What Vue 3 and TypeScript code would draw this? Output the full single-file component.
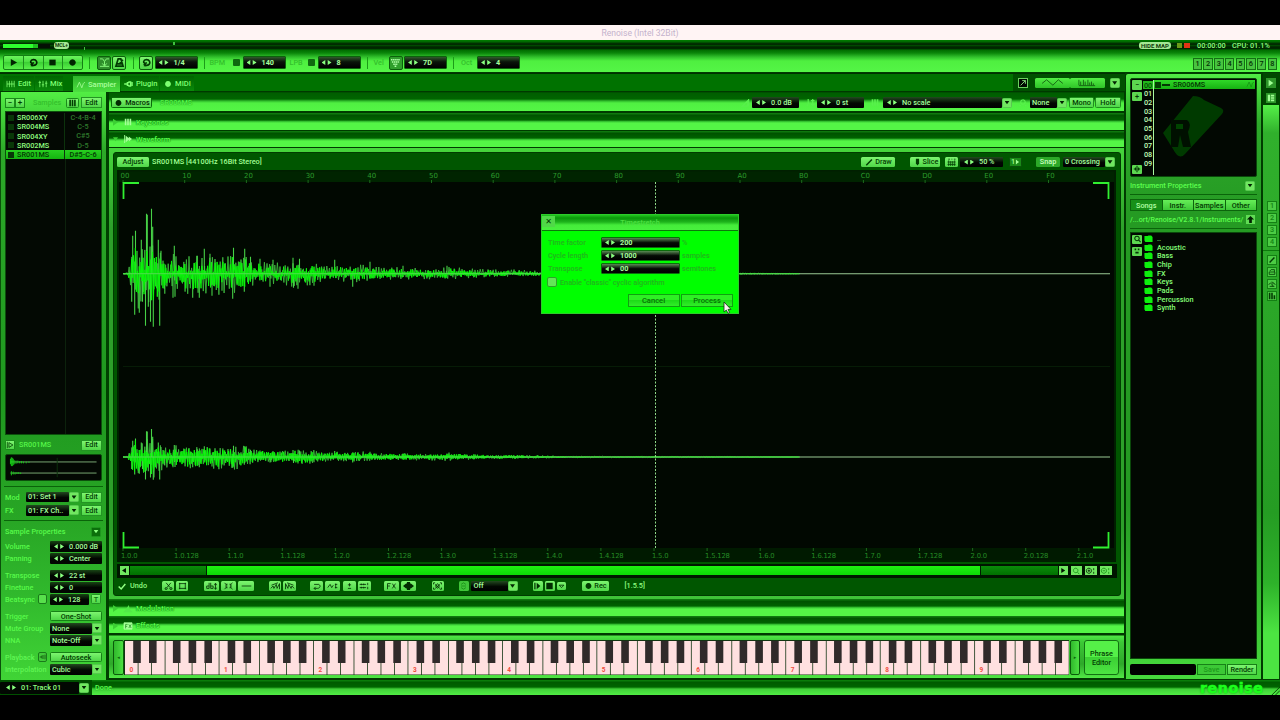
<script setup lang="ts">
type Tool = { w: number; d: string; fill?: boolean }

const icons = {
  play: 'M3 1 L10 5 L3 9 Z',
  loop: 'M3 8.2 L5 6 M3 8.4 L5.8 8.6 M3.6 8 C9 9 10.5 6 9.4 3.8 C8 1 3.5 1.2 2.8 4 C2.5 5.6 4.5 6.2 6.5 5.4',
  stop: 'M2.5 1.8 H9.5 V8.2 H2.5 Z',
  rec: 'M6 1.4 A3.6 3.6 0 1 1 5.99 1.4 Z',
  follow: 'M1 1 H4 L6 4 L8 1 H11 M6 4 V8 M3.5 6 L6 9 L8.5 6 M1 9.3 H11',
  metro: 'M4.5 1 H7.5 L10 9 H2 Z M3 6.5 H9 M6 6.5 L9.8 2',
  wave: 'M1 8 L4 1.5 L7 8.5 L9 3 L10 2 H11',
  plug: 'M0 5 H4 M4 3.5 H5 L6 2.5 H8 V7.5 H6 L5 6.5 H4 Z M8 3.7 H11 M8 6.3 H11',
  piano: 'M2 1 H4 V9 H2 Z M5 1 H7 V9 H5 Z M8 1 H10 V9 H8 Z',
  search: 'M5 1.5 A2.8 2.8 0 1 1 4.99 1.5 M7.2 6.5 L9.5 9',
}

const transport = [icons.play, icons.loop, icons.stop, icons.rec]
const slots = ['1', '2', '3', '4', '5', '6', '7', '8']
const samples = [
  { name: 'SR006XY', key: 'C-4-B-4' },
  { name: 'SR004MS', key: 'C-5' },
  { name: 'SR004XY', key: 'C#5' },
  { name: 'SR002MS', key: 'D-5' },
  { name: 'SR001MS', key: 'D#5-C-6' },
]

const toolGroups: { name: string; tools: Tool[] }[] = [
  { name: 'cut', tools: [
    { w: 12, d: 'M3 1 L8 7 M9 1 L4 7 M3 7 A1.3 1.3 0 1 0 3.1 7 M9 7 A1.3 1.3 0 1 0 9.1 7' },
    { w: 12, d: 'M1.5 2 H10.5 M1.5 8 H10.5 M2.5 1 V9 M9.5 1 V9' } ] },
  { name: 'level', tools: [
    { w: 15, d: 'M3 1 V8 H0 V5 H3 M5 1 V8 H8 V5 H5 M11 2 V9 M9.5 4 L11 1.5 L12.5 4 M9.5 7 L11 9.2 L12.5 7' },
    { w: 15, d: 'M1 1 L4 4 M4 2 V4 H2 M11 1 L8 4 M8 2 V4 H10 M1 9 L4 6 M4 8 V6 H2 M11 9 L8 6 M8 8 V6 H10' },
    { w: 16, d: 'M0 5 H12' } ] },
  { name: 'fade', tools: [
    { w: 12, d: 'M0 8 L3 5 L4 8 L7 3 L8 8 L11 2 V9 M1 4 L9 1' },
    { w: 13, d: 'M1 9 V2 L4 8 L5 3 L8 8 L9 5 L12 8 M3 1 L11 4' } ] },
  { name: 'shape', tools: [
    { w: 13, d: 'M3 3 H9 C12 5 10 8 7 8 H3 M5 6 L3 8 L5 10' },
    { w: 15, d: 'M0 7 L3 3 L5 7 L7 4 M10 2 V8 M9 3 H12 M9 7 H12' },
    { w: 13, d: 'M4 3.5 H8 M6 1.5 V5.5 M4 8 H8' },
    { w: 13, d: 'M0 3 H8 M0 7 H8 M2 2 V4 M5 2 V4 M2 6 V8 M5 6 V8 M10 1 V4 M10 6 V9' } ] },
  { name: 'fx', tools: [
    { w: 15, d: 'M1 9 V2 H5 M1 5 H4 M7 2 L11 8 M11 2 L7 8' },
    { w: 15, d: 'M-1 5 L3 2 H4 V0 H8 V2 H9 L13 5 L9 8 H8 V10 H4 V8 H3 Z', fill: true } ] },
  { name: 'solo', tools: [
    { w: 12, d: 'M1 3 V1 H3 M9 1 H11 V3 M1 7 V9 H3 M9 9 H11 V7 M3 3 L9 8 M9 3 L3 8 M6 2 L8.5 5 L6 8 L3.5 5 Z' } ] },
]

const props1 = [
  { label: 'Volume', value: '0.000 dB' },
  { label: 'Panning', value: 'Center' },
]
const files = ['..', 'Acoustic', 'Bass', 'Chip', 'FX', 'Keys', 'Pads', 'Percussion', 'Synth']
const rows = ['00', '01', '02', '03', '04', '05', '06', '07', '08', '09']
const stretch = [
  { label: 'Time factor', value: '200', unit: '%' },
  { label: 'Cycle length', value: '1000', unit: 'samples' },
  { label: 'Transpose', value: '00', unit: 'semitones' },
]

const topMarks = Array.from({ length: 16 }, (_, i) => ({
  x: 125 + i * 61.7,
  label: i.toString(16).toUpperCase() + '0',
}))
const beatMarks = Array.from({ length: 19 }, (_, i) => {
  const beat = Math.floor(i / 2)
  return {
    x: 121 + i * 53.1,
    label: `${1 + Math.floor(beat / 8)}.${beat % 8}.${i % 2 ? '128' : '0'}`,
  }
})

// Envelope points: x, amplitude above the axis, amplitude below it.
const envelope = [
  [123, 0, 0], [128, 2, 2], [131, 16, 22], [133, 36, 30], [136, 36, 34], [139, 20, 36], [142, 28, 28],
  [144, 24, 36], [146, 36, 40], [149, 26, 30], [151, 40, 36], [153, 38, 40], [156, 23, 28], [159, 28, 38],
  [163, 21, 20], [168, 13, 18], [174, 25, 24], [179, 14, 15], [186, 18, 21], [194, 18, 22], [201, 18, 21],
  [207, 20, 20], [214, 17, 22], [225, 17, 20], [233, 24, 24], [240, 21, 20], [245, 23, 18], [251, 14, 13],
  [262, 14, 10], [272, 13, 12], [280, 10, 10], [293, 15, 14], [300, 13, 13], [310, 12, 12], [318, 12, 12],
  [324, 7, 8], [334, 11, 7], [345, 8, 8], [355, 9, 9], [370, 10, 7], [380, 7, 6], [400, 7, 6], [415, 6, 6],
  [435, 5, 6], [448, 8, 7], [460, 6, 5], [490, 5, 4], [520, 4, 3], [560, 2, 2], [620, 1.2, 1.2], [700, 1, 1],
  [750, 0.8, 0.8], [800, 0.2, 0.2],
]

// Single transients: x, signed distance from the axis (up is negative).
const peaks = [
  [132.7, -38], [135.5, -43], [141.3, -34], [146.5, -60], [147.3, -59], [151.5, -65], [152.7, -47], [158.3, -34],
  [161, -23], [174.3, -28], [197.3, -18], [204.3, -25], [210, -20], [233.5, -26], [244.7, -25], [250.5, -17],
  [260, -15], [273, -14], [293, -16], [299.5, -15], [334.7, -14], [370, -12], [403, -8], [447, -8],
  [131.7, 28], [134.7, 41], [139.3, 39], [142.5, 28], [145.5, 52], [148.3, 33], [150.5, 48], [153.3, 53],
  [159.7, 52], [164.8, 20], [173, 24], [175, 23], [192.7, 24], [199.3, 24], [212, 22], [222, 17], [232.7, 25],
  [244.3, 18], [270, 13], [293.5, 14], [298, 15], [314, 12], [352.7, 13],
]

function level(x: number, side: 1 | 2): number {
  for (let i = 1; i < envelope.length; i++) {
    const a = envelope[i - 1]
    const b = envelope[i]
    if (x <= b[0]) return a[side] + ((b[side] - a[side]) * (x - a[0])) / (b[0] - a[0])
  }
  return 0
}

function trace(axis: number, scale: number, seed: number, floor: number, step: number): string {
  let s = seed
  const rnd = () => {
    s = (s * 16807) % 2147483647
    return s / 2147483647
  }
  let d = `M123 ${axis}`
  for (let x = 124; x < 800; x += step) {
    const up = level(x, 1) * scale * (floor + (1 - floor) * rnd())
    const down = level(x + step / 2, 2) * scale * (floor + (1 - floor) * rnd())
    d += ` L${x.toFixed(1)} ${(axis - up).toFixed(1)} L${(x + step / 2).toFixed(1)} ${(axis + down).toFixed(1)}`
  }
  return d
}

function spikes(axis: number, scale: number): string {
  return peaks.map(([x, h]) => `M${x} ${axis} V${(axis + h * scale).toFixed(1)}`).join(' ')
}

const channels = [
  { axis: 273.7, edge: trace(273.7, 1, 4711, 0.2, 2.6), body: trace(273.7, 0.72, 917, 0.1, 1.9), peak: spikes(273.7, 1) },
  { axis: 457, edge: trace(457, 0.58, 3307, 0.25, 2.6), body: trace(457, 0.46, 77, 0.2, 1.9), peak: spikes(457, 0.43) },
]

const octaves = Array.from({ length: 10 }, (_, i) => 124.6 + i * 94.45)
const whites = [0, 1, 2, 3, 4, 5, 6]
const blacks = [8.6, 24.4, 48.3, 64, 79.8]
</script>

<template>
  <div class="screen">
    <div class="titlebar">Renoise (Intel 32Bit)</div>

    <div class="meters">
      <div class="gain"><b></b></div>
      <span class="pill mcl">MCL+</span>
      <div class="scope"><i></i><b></b></div>
      <span class="pill map">HIDE MAP</span>
      <i class="led olive"></i><i class="led red"></i>
      <span class="clock">00:00:00</span>
      <span class="cpu">CPU: 01.1%</span>
    </div>

    <div class="transport">
      <div class="playgroup">
        <span v-for="(d, i) in transport" :key="i" class="tbtn">
          <svg viewBox="0 0 12 10" :class="{ solid: i !== 1, bold: i === 1 }"><path :d="d" /></svg>
        </span>
      </div>
      <i class="sep s1"></i>
      <span class="sq down b1"><svg viewBox="0 0 12 10"><path :d="icons.follow" /></svg></span>
      <span class="sq b2"><svg viewBox="0 0 12 10" class="bold"><path :d="icons.metro" /></svg></span>
      <i class="sep s2"></i>
      <span class="sq b3"><svg viewBox="0 0 12 10" class="bold"><path :d="icons.loop" /></svg></span>
      <span class="val tv v1">1/4</span>
      <i class="sep s3"></i>
      <span class="faint f1">BPM</span><i class="chk"></i><span class="val tv v2">140</span>
      <span class="faint f2">LPB</span><i class="chk"></i><span class="val tv v2">8</span>
      <i class="sep s3"></i>
      <span class="faint f3">Vel</span>
      <span class="sq lit"><svg viewBox="0 0 12 10"><path class="dots" d="M1 2 H11 M2 4.500 H10 M3.500 7 H8.500 M5 9.300 H7.500" /></svg></span>
      <span class="val tv v1">7D</span>
      <i class="sep s3"></i>
      <span class="faint f4">Oct</span><span class="val tv v3">4</span>
      <div class="slots"><span v-for="n in slots" :key="n">{{ n }}</span></div>
    </div>

    <div class="body">
      <div class="workspace">
        <div class="tabs">
          <span class="tab t1"><svg viewBox="0 0 12 10"><path d="M1 1 V9 M4 1 V9 M7 1 V9 M10 1 V9 M1 5 H10" /></svg>Edit</span>
          <span class="tab t2"><svg viewBox="0 0 12 10"><path d="M2 1 V9 M6 1 V9 M10 1 V9 M0.500 3 H3.500 M4.500 6 H7.500 M8.500 4 H11.500" /></svg>Mix</span>
          <span class="tab t3"><svg viewBox="0 0 12 10"><path :d="icons.wave" /></svg>Sampler</span>
          <span class="tab t4"><svg viewBox="0 0 12 10" class="bold"><path :d="icons.plug" /></svg>Plugin</span>
          <span class="tab t5"><svg viewBox="0 0 12 10" class="solid"><path :d="icons.rec" /></svg>MIDI</span>
          <div class="viewtabs">
            <span class="pop"><svg viewBox="0 0 10 10"><path d="M2 8 L8 2 M4 2 H8 V6" /></svg></span>
            <span class="vt"><svg viewBox="0 0 34 10"><path d="M6 6 L11 2 L18 8 L24 2 L29 6" /></svg></span>
            <span class="vt"><svg viewBox="0 0 34 10"><path d="M8 2 V8 M10 4 V8 M13 2 V8 M15 4 V8 M18 2 V8 M20 5 V8 M22 4 V8 M24 6 V8 M8 8.500 H26" /></svg></span>
            <span class="drop vd"></span>
          </div>
        </div>

        <div class="panes">
          <div class="left">
            <div class="lhead">
              <span class="btn pm">−</span><span class="btn pm">+</span>
              <span class="faint lname">Samples</span>
              <span class="btn kb"><svg viewBox="0 0 12 10" class="solid"><path :d="icons.piano" /></svg></span>
              <span class="btn edit">Edit</span>
            </div>
            <div class="slist">
              <div v-for="(s, i) in samples" :key="s.name" class="srow" :class="{ on: i === 4 }">
                <i></i><span class="nm">{{ s.name }}</span><span class="ky">{{ s.key }}</span>
              </div>
              <div class="sfill"></div>
            </div>
            <div class="lhead second">
              <span class="btn pv"><svg viewBox="0 0 12 10"><path d="M2 1 V9 M4 2 L9 5 L4 8 Z" /></svg></span>
              <span class="lname2">SR001MS</span>
              <span class="btn edit">Edit</span>
            </div>
            <svg class="mini" viewBox="0 0 97 27">
              <path d="M2 7.500 H95 M2 19.500 H95" class="axis" />
              <path d="M2 4 V10 M3 2.500 V12 M4 3 V12 M5 4 V11 M6 5.500 V10 M8 6 V9.500 M10 6 V9 M12 6.500 V9 M14 6.500 V9 M16 7 V9 M19 7 V9 M22 7 V8.500 M3 17.500 V22 M5 18 V21 M7 18.500 V21 M9 18.500 V20.500 M11 18.500 V20.500 M13 19 V20.500" />
              <path d="M52.500 3 V24" class="dim" />
            </svg>
            <i class="rule r1"></i>
            <div class="prow mod"><span class="pl">Mod</span><span class="sel ms">01: Set 1</span><span class="drop"></span><span class="btn edit">Edit</span></div>
            <div class="prow mod"><span class="pl">FX</span><span class="sel ms">01: FX Ch..</span><span class="drop"></span><span class="btn edit">Edit</span></div>
            <i class="rule r2"></i>
            <div class="prow sp"><span class="pl wide">Sample Properties</span><span class="drop dk"></span></div>
            <div v-for="p in props1" :key="p.label" class="prow"><span class="pl">{{ p.label }}</span><span class="val pv2">{{ p.value }}</span></div>
            <div class="prow gap"><span class="pl">Transpose</span><span class="val pv2">22 st</span></div>
            <div class="prow"><span class="pl">Finetune</span><span class="val pv2">0</span></div>
            <div class="prow"><span class="pl">Beatsync</span><i class="box"></i><span class="val pv3">128</span><span class="btn tee">T</span></div>
            <div class="prow gap"><span class="pl">Trigger</span><span class="btn full">One-Shot</span></div>
            <div class="prow"><span class="pl">Mute Group</span><span class="sel ps">None</span><span class="drop"></span></div>
            <div class="prow"><span class="pl">NNA</span><span class="sel ps">Note-Off</span><span class="drop"></span></div>
            <div class="prow gap"><span class="pl dimmer">Playback</span><i class="box snd"><svg viewBox="0 0 12 10"><path d="M2 4 V6 M4 3 V7 M6 2 V8 M9 1.500 V8.500" /></svg></i><span class="btn full">Autoseek</span></div>
            <div class="prow"><span class="pl dimmer">Interpolation</span><span class="sel ps">Cubic</span><span class="drop"></span></div>
          </div>

          <div class="center">
            <div class="bar macros">
              <span class="btn mac"><svg viewBox="0 0 12 10" class="solid"><path :d="icons.rec" /></svg>Macros</span>
              <span class="iname">SR006MS</span>
              <div class="mright">
                <svg viewBox="0 0 10 10" class="mi a"><path d="M2 9 L8 3 V9 Z M9 1 V9" /></svg><span class="val mv">0.0 dB</span>
                <svg viewBox="0 0 10 10" class="mi b"><path d="M3 1 V7 M1 8 H3 M8 1 V9 M6 3 H10 M6 7 H10" /></svg><span class="val mv">0 st</span>
                <svg viewBox="0 0 12 10" class="mi c solid"><path :d="icons.piano" /></svg><span class="val scale">No scale</span><span class="drop"></span>
                <svg viewBox="0 0 10 10" class="mi d"><path d="M5 2 A2.500 2.500 0 1 1 4.900 2 M1 8.500 H3 M7 8.500 H9" /></svg><span class="sel none">None</span><span class="drop"></span>
                <span class="btn mono">Mono</span><span class="btn hold">Hold</span>
              </div>
            </div>
            <div class="bar fold k"><i class="tri"></i><svg viewBox="0 0 12 10" class="solid"><path :d="icons.piano" /></svg><span>Keyzones</span></div>
            <div class="bar fold w"><i class="tri open"></i><svg viewBox="0 0 12 10" class="solid"><path d="M1 0 V10 H2 V0 Z M3 0.500 L8 5 L3 9.500 Z M7 2 L11 5 L7 8 Z" /></svg><span>Waveform</span></div>

            <div class="frame">
              <div class="inner">
                <div class="whead">
                  <span class="btn adj">Adjust</span>
                  <span class="info">SR001MS [44100Hz 16Bit Stereo]</span>
                  <div class="wright">
                    <span class="btn draw"><svg viewBox="0 0 12 10" class="bold"><path d="M2 9 L9 2" /></svg>Draw</span>
                    <span class="btn slice"><svg viewBox="0 0 10 10" class="solid"><path d="M3 1 H7 V7 L5 9.500 L3 7 Z" /></svg>Slice</span>
                    <span class="btn grid"><svg viewBox="0 0 12 10"><path d="M1 5 H11 M1 8 H11 M2.500 3 V10 M5 4 V10 M7.500 4 V10 M10 3 V10 M2 1.500 H4 M6 1.500 H7 M9 1.500 H11" /></svg></span>
                    <span class="val pct">50 %</span>
                    <span class="btn one">1<svg viewBox="0 0 6 10" class="solid"><path d="M1 2 L5 5 L1 8 Z" /></svg></span>
                    <span class="btn snap">Snap</span>
                    <span class="sel cross">0 Crossing</span><span class="drop"></span>
                  </div>
                </div>
                <svg class="editor" viewBox="117 170 999 392">
                  <rect x="117" y="170" width="999" height="392" fill="#001f00" />
                  <rect x="119" y="171.500" width="995" height="11" fill="#002400" />
                  <rect x="119" y="182" width="995" height="366" fill="#010801" />
                  <rect x="119" y="548" width="995" height="12" fill="#001a00" />
                  <g v-for="m in topMarks" :key="m.label">
                    <text :x="m.x" y="178" text-anchor="middle" class="mark">{{ m.label }}</text>
                    <rect :x="m.x - 2.500" y="180" width="1" height="3" fill="#1c6a1c" />
                  </g>
                  <g v-for="m in beatMarks" :key="m.label">
                    <text :x="m.x" y="557.500" class="mark low">{{ m.label }}</text>
                    <rect :x="m.x + 1.500" y="548" width="1" height="3" fill="#1c6a1c" />
                  </g>
                  <path d="M123 366.500 H1110" stroke="#061c06" fill="none" />
                  <g v-for="c in channels" :key="c.axis">
                    <path :d="`M123 ${c.axis} H1110`" class="axisline" />
                    <path :d="c.edge" class="edge" />
                    <path :d="c.peak" class="peak" />
                    <path :d="c.body" class="wavebody" />
                    <path :d="`M123 ${c.axis} H800`" class="axisline over" />
                  </g>
                  <path d="M655.500 182 V548" class="cursorline" />
                  <path d="M123.500 199 V183 H139 M1093 183 H1108.500 V199 M123.500 532 V547.500 H139 M1093 547.500 H1108.500 V532" class="corner" />
                </svg>
                <div class="scroller">
                  <span class="sb l"></span>
                  <div class="track"><i class="sa"></i><i class="thumb"></i></div>
                  <span class="sb"></span>
                  <span class="zb z1"><svg viewBox="0 0 12 10"><path :d="icons.search" /></svg></span>
                  <span class="zb z2"><svg viewBox="0 0 12 10" class="dark"><path d="M4 1.500 A3.200 3.200 0 1 1 3.990 1.500 M2.500 4.700 H5.500 M4 3.200 V6.200 M10 1.500 V4 M10 6 V8.500" /></svg></span>
                  <span class="zb"><svg viewBox="0 0 12 10"><path d="M4 1.500 A3.200 3.200 0 1 1 3.990 1.500 M2.500 4.700 H5.500 M10 1.500 V4 M10 6 V8.500" /></svg></span>
                </div>
                <div class="tools">
                  <span class="undo"><svg viewBox="0 0 12 10"><path d="M2 5 L5 8 L10 2" /></svg>Undo</span>
                  <div v-for="g in toolGroups" :key="g.name" class="grp" :class="g.name">
                    <span v-for="(t, i) in g.tools" :key="i" class="tool" :style="{ width: t.w + 'px' }">
                      <svg viewBox="0 0 12 10" :class="{ solid: t.fill }"><path :d="t.d" /></svg>
                    </span>
                  </div>
                  <span class="tool tw"><svg viewBox="0 0 12 10"><path d="M3 3 L6 1 L9 3 M3 7 L6 9 L9 7 M3 5 H9" /></svg></span><span class="sel off">Off</span><span class="drop"></span>
                  <span class="tool p1"><svg viewBox="0 0 12 10" class="solid"><path d="M2 1 H3.500 V9 H2 Z M5 1 L9.500 5 L5 9 Z" /></svg></span>
                  <span class="tool p2"><svg viewBox="0 0 12 10" class="solid"><path d="M2 1 H10 V9 H2 Z" /></svg></span>
                  <span class="tool p2 sm"><svg viewBox="0 0 12 10"><path d="M3 4 L6 7 L9 4 Z" /></svg></span>
                  <span class="btn recb"><svg viewBox="0 0 12 10" class="solid"><path :d="icons.rec" /></svg>Rec</span>
                  <span class="pos">[1.5.5]</span>
                </div>
              </div>
            </div>

            <div class="bar fold m"><i class="tri"></i><svg viewBox="0 0 12 10" class="solid"><path d="M0 9 L5 3 L7 0 L8 5 L12 9 Z" /></svg><span>Modulation</span></div>
            <div class="bar fold e"><i class="tri"></i><svg viewBox="0 0 12 10"><path d="M1 1 H11 V9 H1 Z" fill="currentColor" /><path d="M3 8 V3 H5.500 M3 5.500 H5 M7 3 L10 7.500 M10 3 L7 7.500" class="ink" /></svg><span>Effects</span></div>
            <div class="keyrow">
              <span class="kside kl">◂</span>
              <svg class="piano" viewBox="124 640 945 35">
                <rect x="124" y="640" width="945" height="35" fill="#123412" />
                <g v-for="(o, i) in octaves" :key="i">
                  <rect v-for="w in whites" :key="w" :x="o + w * 13.493 + 0.400" y="641" width="12.700" height="33.500" fill="#ffe0e0" />
                  <rect v-for="b in blacks" :key="b" :x="o + b" y="641" width="7.600" height="22" fill="#302a2a" />
                  <text :x="o + 6.800" y="672.300" text-anchor="middle" class="oct">{{ i }}</text>
                </g>
              </svg>
              <span class="kside kr">▸</span>
              <span class="phrase">Phrase<br />Editor</span>
            </div>
          </div>
        </div>
      </div>

      <div class="right">
        <div class="ilist">
          <div class="ibtns"><span class="ib">−</span><span class="ib">+</span><span class="ib last"><svg viewBox="0 0 10 10"><path d="M1 5 H4 M9 5 H6 M3 3 V7 M7 3 V7 M5 1 V9" /></svg></span></div>
          <div class="nums"><span v-for="r in rows" :key="r" :class="{ on: r === '00' }">{{ r }}</span></div>
          <div class="inames">
            <div class="cur"><i></i><b></b><span>SR006MS</span><svg viewBox="0 0 12 10"><path :d="icons.wave" /></svg></div>
            <svg class="mark-logo" viewBox="1155 90 101 86">
              <path d="M1194 97 Q1201 97 1205 101 L1222 109 Q1226 111 1223 115 L1186 155 Q1180 162 1174 150 L1164 134 Z" fill="#003a00" />
              <path d="M1172 121 H1188 Q1193 124 1189 133 L1192 148 H1184 L1181 136 L1179 148 H1172 Z" fill="#001000" />
              <path d="M1177 125 H1184 V130 H1177 Z" fill="#004400" />
            </svg>
          </div>
        </div>
        <div class="ihead"><span>Instrument Properties</span><span class="drop"></span></div>
        <i class="rrule"></i>
        <div class="dtabs"><span class="on">Songs</span><span>Instr.</span><span>Samples</span><span>Other</span></div>
        <div class="path"><span>/...ort/Renoise/V2.8.1/Instruments/</span><span class="up"><svg viewBox="0 0 10 10" class="solid"><path d="M5 1 L9 5 H6.500 V9 H3.500 V5 H1 Z" /></svg></span></div>
        <i class="rrule"></i>
        <div class="files">
          <div class="fbtns"><span class="ib"><svg viewBox="0 0 10 10"><path :d="icons.search" /></svg></span><span class="ib"><svg viewBox="0 0 10 10" class="solid"><path d="M2 2 H4 V4 H2 Z M6 2 H8 V4 H6 Z M3 6 H7 V8 H3 Z" /></svg></span></div>
          <div class="flist">
            <div v-for="f in files" :key="f"><svg viewBox="0 0 10 8"><path d="M0.500 1 H4 L5 0.300 H8 L9.500 2 V7.500 H1.500 L0.500 6 Z" /></svg>{{ f }}</div>
          </div>
        </div>
        <div class="save"><span class="fname"></span><span class="btn sv">Save</span><span class="btn rd">Render</span></div>
      </div>

      <div class="strip">
        <div class="stop">
          <span><svg viewBox="0 0 10 10" class="solid"><path d="M2 1 L8 5 L2 9 Z" /></svg></span>
          <span><svg viewBox="0 0 10 10" class="solid"><path d="M1 1 H4 V9 H1 Z M5 1 H9 V3 H5 Z M5 4 H9 V6 H5 Z M5 7 H9 V9 H5 Z" /></svg></span>
        </div>
        <div class="snum"><span v-for="n in 4" :key="n">{{ n }}</span></div>
        <i class="srule"></i>
        <div class="snum tools2">
          <span><svg viewBox="0 0 10 10" class="bold"><path d="M2 8 L8 2" /></svg></span>
          <span><svg viewBox="0 0 10 10"><path d="M2 4 L4 2 H8 V5 M1.500 8 V5 H8.500 V8 Z" /></svg></span>
          <span><svg viewBox="0 0 10 10"><path d="M1 6 C1 3 9 3 9 6 M2 8 H8 M5 2 L7 4 M4 6 H6 V8" /></svg></span>
          <span><svg viewBox="0 0 10 10" class="solid"><path d="M1 1 H3 V9 H1 Z M4 1 H6 V9 H4 Z M7 4 H9 V9 H7 Z" /></svg></span>
        </div>
      </div>
    </div>

    <div class="status">
      <span class="val trk">01: Track 01</span><span class="drop"></span>
      <div class="msg"><span>Done.</span><strong>renoise</strong><svg viewBox="0 0 10 10"><path d="M1 10 L10 1 M5 10 L10 5" /></svg></div>
    </div>

    <div class="dialog">
      <div class="dtitle"><span class="x">✕</span><span class="dt">Timestretch</span></div>
      <div class="dbody">
        <div v-for="r in stretch" :key="r.label" class="drow"><span class="dl">{{ r.label }}</span><span class="val dv">{{ r.value }}</span><span class="du">{{ r.unit }}</span></div>
        <div class="drow opt"><i></i><span>Enable "classic" cyclic algorithm</span></div>
        <div class="dbtns"><span>Cancel</span><span>Process</span></div>
      </div>
    </div>
    <svg class="pointer" viewBox="0 0 9 13"><path d="M1 1 V11 L3.300 9 L5 12.300 L6.600 11.500 L5 8.400 H8 Z" /></svg>
  </div>
</template>

<style>
html, body { margin: 0; background: #000; overflow: hidden; }
</style>

<style scoped>
.screen, .screen * { box-sizing: border-box; }
.screen {
  position: relative; width: 1280px; height: 720px; padding-top: 25px; background: #000; overflow: hidden;
  font: 500 7.3px/1 Roboto, "DejaVu Sans", sans-serif; color: #8fff80; white-space: nowrap;
}
i { display: block; font-style: normal; flex: none; }
span { flex: none; }
svg { display: block; flex: none; fill: none; stroke: currentColor; stroke-width: 1; }
svg.solid { fill: currentColor; stroke: none; }
svg.bold { stroke-width: 1.8; }

.btn, .drop, .sq, .tool {
  display: flex; align-items: center; justify-content: center; color: #023c02; flex: none;
  background: linear-gradient(#7df570, #4fd648); border-radius: 1.5px; height: 10px;
}
.btn svg, .tool svg { height: 8px; width: 11px; }
.drop { width: 10px; border: 1px solid #58c850; background: #70e860; }
.drop::after { content: ""; width: 5px; height: 3.5px; background: #032403; clip-path: polygon(0 0, 100% 0, 50% 100%); }
.val, .sel {
  display: flex; align-items: center; height: 10.5px; background: linear-gradient(#234a20, #020802 55%, #000);
  color: #a5ff9c; border-radius: 1px; flex: none;
}
.val { padding-left: 4px; }
.val::before {
  content: ""; width: 10px; height: 5px; margin-right: 5px; background: #8aff80; flex: none;
  clip-path: polygon(0 50%, 38% 0, 38% 100%, 0 50%, 100% 50%, 62% 100%, 62% 0, 100% 50%);
}
.sel { padding-left: 2px; }
.faint { color: #34c02c; }

.titlebar { height: 15px; background: #fff4f4; color: #c4b2cc; text-align: center; line-height: 16px; font-size: 8.6px; font-weight: 400; }

.meters { height: 10px; display: flex; align-items: center; padding: 1px 0 0 3px;
  background: linear-gradient(#007800 0 1px, #006000 2px, #003000 3.500px, #002800 5px, #004a00 5.500px, #002400 7px, #002800 8.500px, #006800); }
.gain { width: 47px; height: 4px; background: linear-gradient(90deg, #2eff2e 30px, #041004 30px); display: flex; align-items: center; }
.gain b { width: 5px; height: 4px; background: #1fc01f; margin-left: 30px; }
.pill { height: 7px; border-radius: 3px; background: #a4e894; color: #143c10; font-size: 6px; font-weight: 700; display: flex; align-items: center; justify-content: center; }
.mcl { width: 15px; margin-left: 4px; font-size: 5px; }
.scope { width: 1060px; height: 8px; margin-left: 5px; display: flex; }
.scope i { width: 1px; height: 3px; background: #40c040; margin: 5px 0 0 10px; }
.scope b { width: 2px; height: 3px; background: #40c040; margin: 0 0 0 88px; }
.map { width: 32px; margin-left: 5px; }
.led { width: 5px; height: 5px; margin-left: 6px; }
.olive { background: #6a9a18; }
.red { background: #e03414; margin-left: 2px; width: 6px; }
.clock { margin-left: 7px; width: 29px; }
.cpu { margin-left: 6px; }

.transport { height: 23px; display: flex; align-items: center; padding: 2px 3px 0 3px;
  background: linear-gradient(#006c00, #0a860a 3px, #30c02c 7px, #4ff040 11px, #54f546 22px, #003a00 22px); }
.playgroup { display: flex; height: 15.5px; width: 80px; background: linear-gradient(#6af55c, #48dc3e 50%, #3cd034 50%, #58f04a); border: 1px solid #148014; border-radius: 2px; }
.tbtn { flex: 1; display: flex; align-items: center; justify-content: center; color: #012501; border-right: 1px solid #1c8c1c; }
.tbtn:last-child { border-right: 0; }
.tbtn svg { width: 11px; height: 9px; }
.sep { width: 1px; height: 12px; background: #1c9c18; }
.s1 { margin-left: 6px; }
.sq { width: 14px; height: 14px; border: 1px solid #0c600c; border-radius: 2px; }
.sq svg { width: 11px; height: 9px; }
.sq.down { background: #2f8f2c; color: #8cff80; }
.sq.lit { background: #2f9f2c; color: #b0ffa8; margin-left: 3px; }
.dots { stroke-width: 1.7; stroke-dasharray: 1.7 0.6; }
.b1 { margin-left: 7px; } .b2 { margin-left: 1px; } .s2 { margin-left: 7px; } .b3 { margin-left: 5px; }
.tv { width: 43px; height: 13px; font-weight: 700; background: linear-gradient(#305a2c, #0a140a 45%, #000); border: 1px solid #0c600c; padding-left: 3px; }
.v1 { margin-left: 1.500px; } .v2 { margin-left: 3px; } .s3 { margin-left: 6px; }
.f1 { width: 28px; padding-left: 5px; } .f2 { width: 22px; padding-left: 4px; } .f3 { width: 18px; padding-left: 6px; } .f4 { width: 20px; padding-left: 7px; }
.v3 { margin-left: 3px; }
.chk { width: 7px; height: 7px; background: #0f6a0f; border-radius: 1px; }
.slots { display: flex; margin: 3px 0 0 auto; gap: 1.3px; }
.slots span { width: 9.4px; height: 11.5px; background: #48c440; border: 1px solid #147014; color: #043004; display: flex; align-items: center; justify-content: center; }

.body { display: flex; height: 607px; background: #004800; }
.workspace { width: 1125px; }
.tabs { height: 18px; display: flex; background: #007200; padding: 2px 0 0 3px; border-top: 1px solid #003000; }
.tab { display: flex; align-items: center; height: 15px; gap: 2px; padding: 1px 0 0 3px; background: linear-gradient(#006400, #0a8a0a); color: #7dff70; font-size: 7.6px; }
.tab svg { width: 10px; height: 8px; }
.t1 { width: 31px; } .t2 { width: 28px; margin-left: 1px; } .t3 { width: 47px; margin-left: 10px; height: 16px; background: linear-gradient(#2eb42a, #4ce040); color: #a8ff9c; }
.t4 { width: 38px; margin-left: 1px; } .t5 { width: 34px; margin-left: 1px; }
.viewtabs { margin: -2px 0 0 auto; width: 112px; background: #005000; display: flex; align-items: center; padding: 1px 0 0 5px; }
.pop { width: 10px; height: 10px; background: #020802; color: #9cff90; border: 1px solid #6cd060; }
.vt { width: 34.5px; height: 9.5px; background: linear-gradient(#52ee44, #2fc428); border-radius: 1.5px; color: #084008; margin-left: 0.7px; }
.pop + .vt { margin-left: 7px; }
.vt svg { width: 34px; height: 9px; stroke-width: 0.8; }
.vd { margin-left: 5px; }

.panes { display: flex; height: 589px; border-top: 1px solid #003800; }
.left { width: 106px; padding: 5px 4px 0 4px; background: linear-gradient(#52ee44, #2ca828 60px, #1f981f 300px, #28a625 430px, #30b82c 500px, #40d436); border-left: 1px solid #0a500a; }
.lhead { display: flex; align-items: center; height: 11px; }
.pm { width: 10px; border: 1px solid #1a8a1a; font-size: 8px; border-radius: 0; }
.lname { width: 41px; padding-left: 8px; }
.kb { width: 13px; border: 1px solid #1a8a1a; }
.edit { width: 21px; height: 11px; border: 1px solid #249424; margin-left: auto; border-radius: 0; }
.slist { height: 324px; margin-top: 3px; background: #030903; border: 1px solid #0c500c; padding-top: 1px; display: flex; flex-direction: column; }
.srow { display: flex; align-items: center; height: 9.25px; flex: none; }
.srow i { width: 6px; height: 6px; background: #083808; margin-left: 2px; }
.nm { width: 51px; padding-left: 3px; height: 100%; line-height: 9.5px; border-right: 1px solid #0c330c; }
.ky { flex: 1; text-align: center; color: #2f7a2c; }
.srow.on { background: linear-gradient(#28d020, #14b410); color: #033803; }
.srow.on .ky { color: #033803; }
.sfill { flex: 1; width: 60px; border-right: 1px solid #0c220c; }
.second { margin-top: 4.500px; }
.pv { width: 10px; border: 1px solid #1a8a1a; }
.lname2 { padding-left: 4px; color: #55f548; }
.mini { width: 97px; height: 27px; margin-top: 3px; background: #030903; stroke: #16d816; border: 1px solid #0c500c; border-radius: 2px; }
.mini .axis { stroke: #a0dc98; stroke-width: 0.8; } .mini .dim { stroke: #0c330c; }
.rule { height: 1px; background: #0a640a; margin: 5px -1px 0; }
.prow { display: flex; align-items: center; height: 11.950px; }
.pl { width: 45px; color: #58fa4a; flex: none; }
.dimmer { color: #60f654; }
.wide { width: 86px; }
.mod { height: 13.3px; }
.r1 + .mod { margin-top: 4px; }
.mod .pl { width: 21px; }
.ms { width: 43px; }
.rule.r2 { margin-top: 3px; }
.sp { height: 18px; margin-top: 1.500px; }
.dk { background: #0b700b; border-color: #1f961f; }
.dk::after { background: #8cff80; }
.pv2 { width: 52px; } .pv3 { width: 39px; padding-left: 3px; }
.left .val { background: linear-gradient(#184414, #010601 50%); }
.gap { margin-top: 5.100px; }
.box { width: 9px; height: 10px; margin: 0 3px 0 -12px; border: 1px solid #1a7a1a; background: #58e04c; border-radius: 2px; color: #033803; }
.box svg { width: 8px; height: 8px; }
.box.snd { background: #42c83a; }
.tee { width: 10px; margin-left: 2px; border: 1px solid #249424; color: #0a740a; }
.full { width: 52px; border: 1px solid #178017; }
.ps { width: 42px; }

.center { width: 1019px; border-left: 3px solid #004000; border-right: 1px solid #003800; }
.bar { display: flex; align-items: center; background: linear-gradient(#004a00, #005e00 1.500px, #006400 7px, #30bc2c 9px, #50f042 11px, #54f546); }
.macros { height: 21px; border-bottom: 2px solid #003a00; padding: 2px 0 0 2px; }
.mac { width: 41px; height: 11px; border: 1px solid #0a6a0a; gap: 1px; color: #032a03; }
.iname { color: #58f84c; margin-left: 8px; text-shadow: 0 0 1px #0a7a0a; }
.mright { margin-left: auto; display: flex; align-items: center; padding-right: 3px; }
.mi { width: 10px; height: 9px; color: #58f04c; stroke-width: 1.4; margin-right: 2px; }
.mi.b { margin-left: 6px; } .mi.c { margin: 0 3px 0 6px; } .mi.d { margin: 0 2px 0 6px; }
.mv { width: 47px; font-weight: 500; }
.scale { width: 119px; }
.none { width: 27px; }
.mono, .hold { height: 11px; border: 1px solid #1f8f1f; }
.mono { width: 25px; margin-left: 2px; } .hold { width: 26px; margin-left: 1px; }
.fold { height: 17.5px; border-bottom: 1px solid #003a00; padding: 1px 0 0 4px; color: #5cff50; background: linear-gradient(#0e780e 0 1px, #005200 2px, #006200 7px, #34c030 8.500px, #54f546 10px); text-shadow: 0 0 1px #067006, 0 0 1px #0c800c; font-size: 7.500px; }
.fold svg { width: 10px; height: 8px; margin-left: 5px; color: #a4ff98; }
.fold .ink { stroke: #2c9828; }
.fold span { margin-left: 3px; }
.k { padding-top: 2px; }
.m { border-bottom: 0; height: 17px; padding-top: 2px; }
.e { height: 18px; padding-top: 3px; }
.m svg { color: #52e848; }
.tri { width: 5px; height: 7px; background: #3cd034; clip-path: polygon(0 0, 100% 50%, 0 100%); }
.tri.open { clip-path: polygon(0 20%, 100% 20%, 50% 80%); }

.frame { height: 451px; padding: 4px 3px 3px 4px; background: linear-gradient(#46d63c, #2da02a 80px, #2da02a 380px, #3fc438); }
.inner { height: 444px; background: #005600; border: 1px solid #003c00; border-radius: 3px; padding: 0 3px; }
.whead { height: 17px; display: flex; align-items: center; padding-top: 1px; }
.adj { width: 32px; }
.info { margin-left: 3px; color: #a0ff94; }
.wright { display: flex; align-items: center; margin-left: auto; padding-right: 2px; }
.draw { width: 34px; } .slice { width: 30px; margin-left: 15px; }
.grid { width: 13px; margin-left: 5px; } .pct { width: 43px; margin-left: 2px; }
.one { width: 13px; margin-left: 6px; background: #1a8a18; border: 1px solid #0a500a; color: #a0ff94; }
.one svg { width: 5px; }
.snap { width: 24px; margin-left: 14px; background: #2ca828; color: #c8ffc0; }
.cross { width: 42px; margin-left: 3px; }
.editor { width: 999px; height: 392px; stroke: none; }
.mark { font: 400 7px "DejaVu Sans", sans-serif; fill: #2c9a2c; stroke: none; }
.low { font-size: 6.800px; fill: #258a25; letter-spacing: -0.200px; }
.axisline { stroke: #9ac894; stroke-width: 1.1; }
.over { stroke-width: 0.8; opacity: 0.55; }
.edge { stroke: #3cb43c; stroke-width: 0.900; }
.peak { stroke: #46d046; stroke-width: 1.100; }
.wavebody { stroke: #08f808; stroke-width: 1; }
.cursorline { stroke: #8fd888; stroke-width: 1; stroke-dasharray: 2 1.500; }
.corner { stroke: #30f030; stroke-width: 1.800; }
.scroller { height: 14px; margin-top: 1.500px; background: #001600; display: flex; align-items: center; padding: 0 3px; }
.sb, .zb { height: 9px; width: 8.500px; background: #70e860; display: flex; align-items: center; justify-content: center; flex: none; }
.sb::after { content: ""; width: 4px; height: 5px; background: #021602; clip-path: polygon(0 0, 100% 50%, 0 100%); }
.sb.l::after { transform: scaleX(-1); }
.track { display: flex; width: 928px; height: 9px; margin: 0 1px 0 1.500px; background: linear-gradient(#0a8c0a, #007000); }
.sa { width: 77px; border-right: 1px solid #001c00; }
.thumb { width: 774px; background: linear-gradient(#1ff012, #0cd806); border-right: 1px solid #001c00; }
.zb { width: 12px; margin-left: 3px; color: #138a13; }
.zb svg { width: 11px; height: 8px; } .zb .dark { color: #021602; }
.z1 { width: 11px; }
.tools { height: 16px; display: flex; align-items: center; margin-top: 0.500px; }
.undo { display: flex; align-items: center; gap: 3px; width: 45px; color: #8fff80; }
.undo svg { width: 10px; height: 9px; stroke-width: 1.800; }
.grp { display: flex; gap: 2.200px; margin-left: 15px; }
.tool { color: #022c02; }
.grp .tool svg, .tool svg { width: 11px; height: 8px; }
.cut { margin-left: 0; } .level { margin-left: 15.500px; } .fade { margin-left: 15px; } .shape { margin-left: 14px; }
.fx { margin-left: 13px; } .solo { margin-left: 15.500px; }
.tw { width: 10px; margin-left: 15px; background: #3fc438; color: #178a14; }
.off { width: 37px; margin-left: 2px; padding-left: 3px; }
.p1 { width: 10px; margin-left: 15px; } .p2 { width: 10px; margin-left: 2px; } .sm { height: 8px; width: 9px; }
.recb { width: 27px; margin-left: 16px; }
.pos { margin-left: 16px; }

.keyrow { display: flex; height: 46px; padding: 6px 0 0 4px; background: linear-gradient(#003a00 1px, #4fe844 2px, #3cc836 8px, #2ea82a 30px, #50e844 44px, #003a00 44px); }
.kside { width: 11px; height: 35px; border: 1px solid #0a5a0a; border-radius: 2px; background: linear-gradient(90deg, #30b82c, #4ce042); color: #0a640a; font-size: 5px; display: flex; align-items: center; justify-content: center; }
.piano { width: 945px; height: 35px; stroke: none; }
.oct { font: 700 6.500px Roboto, sans-serif; fill: #f04c3c; stroke: none; }
.kr { width: 10px; margin-left: 1px; }
.phrase { width: 35px; height: 35px; margin-left: 4px; border: 1px solid #127012; border-radius: 3px; color: #023c02; text-align: center; line-height: 9.500px; padding-top: 7.500px; background: linear-gradient(#55f048 50%, #3cd034 50%, #4ce442); }

.right { width: 138px; border: solid #003c00; border-width: 1px 2px 1px 1px; padding: 4px 4px 0 4px; background: linear-gradient(#50ec44, #2da82a 50px, #259a23 140px, #259a23 430px, #46d83c); border-top-left-radius: 3px; }
.ilist { display: flex; width: 127px; height: 99px; background: #020802; border: 1px solid #0a480a; padding: 1px; border-radius: 2px; overflow: hidden; }
.ibtns { width: 12px; display: flex; flex-direction: column; gap: 2px; }
.ib { width: 10px; height: 9.500px; background: #5cd850; border-radius: 1px; color: #043404; display: flex; align-items: center; justify-content: center; }
.ib svg { width: 8px; height: 8px; stroke-width: 1.300; }
.last { margin-top: auto; margin-bottom: 1px; }
.nums { width: 12px; border-right: 1px solid #a8f8a0; color: #c0ffb8; padding-top: 0.500px; }
.nums span { display: block; height: 8.700px; line-height: 9px; padding-left: 1px; }
.nums .on { color: #054805; background: #20b81a; }
.inames { flex: 1; }
.cur { height: 9px; display: flex; align-items: center; background: linear-gradient(#30d828, #16b012); color: #033803; }
.cur i { width: 6px; height: 6px; background: #044004; margin-left: 1px; } .cur b { width: 8px; height: 2px; background: #033803; margin: 0 3px 0 1px; }
.cur svg { width: 9px; height: 7px; margin-left: auto; color: #148c12; }
.mark-logo { width: 101px; height: 86px; stroke: none; }
.ihead { display: flex; align-items: center; justify-content: space-between; height: 17px; color: #5cff4e; padding-right: 2px; }
.rrule { height: 1px; background: #0a640a; margin-bottom: 4px; }
.dtabs { display: flex; height: 11.500px; width: 127px; border: 1px solid #0c640c; margin-bottom: 2.500px; }
.dtabs span { flex: 1; text-align: center; line-height: 11px; background: linear-gradient(#66ee58, #3ec838); color: #033a03; border-right: 1px solid #0c640c; }
.dtabs span:last-child { border: 0; }
.dtabs .on { background: #189018; color: #b0ffa4; }
.path { display: flex; align-items: center; justify-content: space-between; height: 13px; color: #5cff4e; padding-right: 2px; margin-bottom: 2px; font-size: 7.100px; }
.up { width: 9px; height: 9px; background: #60dc54; color: #022002; } .up svg { width: 9px; height: 9px; }
.files { display: flex; width: 127px; height: 427px; background: #020802; border: 1px solid #0a480a; padding: 1.500px 1px; }
.path + .rrule { margin-bottom: 3px; }
.fbtns { display: flex; flex-direction: column; gap: 2.500px; width: 12px; }
.flist div { display: flex; align-items: center; height: 8.650px; gap: 4px; color: #86ff78; }
.flist svg { width: 9px; height: 7.500px; fill: #0df00d; stroke: none; }
.save { display: flex; align-items: center; margin-top: 5px; height: 11px; }
.fname { width: 66px; height: 11px; background: #000; border-radius: 2px; margin-right: 1px; }
.sv, .rd { height: 11px; border: 1px solid #178017; border-radius: 0; }
.sv { width: 29px; margin-right: 1px; background: #3cc836; color: #1f9c1c; } .rd { width: 30px; }

.strip { width: 17px; background: linear-gradient(#55f048 32px, #30b02c 60px, #259c23 440px, #2eb22a 510px, #4ce442 560px); border-right: 1px solid #004800; border-bottom: 1px solid #003c00; }
.stop { height: 32px; background: #004800; padding: 5px 3px; display: flex; flex-direction: column; gap: 4.500px; }
.stop span { width: 10px; height: 10px; background: #2c9628; color: #a0ff94; padding: 1px; }
.stop svg { width: 8px; height: 8px; }
.snum { padding: 96px 0 0 4px; display: flex; flex-direction: column; gap: 2.300px; }
.snum span { width: 10px; height: 9.700px; background: #4ccc44; border: 1px solid #148014; color: #128412; display: flex; align-items: center; justify-content: center; }
.srule { height: 1px; background: #0e780e; margin-top: 3.500px; }
.snum.tools2 { padding-top: 4px; }
.tools2 span { color: #043c04; } .tools2 svg { width: 8px; height: 8px; }

.status { display: flex; height: 15px; align-items: center; background: #005000; }
.trk { width: 79px; height: 12px; background: #020802; padding-left: 6px; color: #8fff80; }
.msg { flex: 1; margin-left: 3px; height: 15px; display: flex; align-items: center; padding: 1px 0 0 3px; color: #5cff50; text-shadow: 0 0 1px #067006; background: linear-gradient(#0a7c0a 1px, #005a00 2px, #006400 7px, #40d038 9px, #50ec44); }
.msg strong { margin-left: auto; width: 69px; font: 700 14px/13px "DejaVu Sans", sans-serif; letter-spacing: 0.700px; color: #1cff1c; text-shadow: 0 0 2px #067806; -webkit-text-stroke: 0.6px #1cff1c; }
.msg svg { width: 9px; height: 9px; margin: 4px 0 0 2px; color: #044004; }

.dialog { position: absolute; left: 541px; top: 214px; width: 198px; height: 100px; background: #00ff00; border: 1px solid #2ccc2a; }
.dtitle { height: 16px; display: flex; align-items: center; background: linear-gradient(#22c41e, #0a980a 3px, #1eb41c 7px, #44ec3a 10px, #48f03e); border-bottom: 1px solid #0c780c; }
.x { width: 13px; height: 11px; margin-top: -3px; background: #50d848; color: #033803; text-align: center; line-height: 11px; font-size: 8px; }
.dt { width: 170px; text-align: center; color: #4ce040; }
.dbody { padding: 5px 5px 0 5px; color: #22b41e; }
.drow { display: flex; align-items: center; height: 13.200px; }
.dl { width: 54px; padding-left: 1px; }
.dv { width: 79px; height: 11px; border: 1px solid #0c6c0c; background: linear-gradient(#5a8c54, #040a04 52%, #000); font-weight: 700; padding-left: 3px; }
.du { margin-left: 2px; }
.opt i { width: 10px; height: 10px; border: 1px solid #2ca428; background: #62e656; border-radius: 2px; margin-right: 3px; }
.dbtns { display: flex; justify-content: flex-end; gap: 1.500px; margin-top: 5px; }
.dbtns span { width: 52px; height: 13.500px; line-height: 12px; text-align: center; font-size: 7.600px; color: #057005; border: 1px solid #10a010; background: linear-gradient(#2ef024 50%, #1edc18 50%, #30ee28); }
.pointer { position: absolute; left: 723px; top: 301px; width: 9px; height: 13px; fill: #fff4f4; stroke: #143414; stroke-width: 0.800; }
</style>
